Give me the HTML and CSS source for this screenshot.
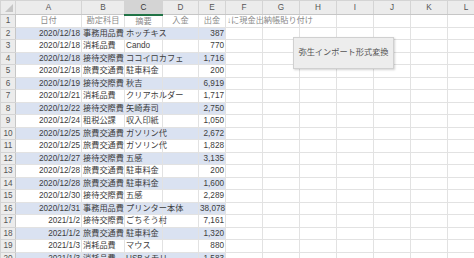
FILE: index.html
```html
<!DOCTYPE html>
<html lang="ja">
<head>
<meta charset="utf-8">
<link rel="stylesheet" href="styles.css">
</head>
<body>
<div class="sheet">
<table class="grid">
  <colgroup>
    <col class="w-rn"><col class="w-a"><col class="w-b"><col class="w-c"><col class="w-d"><col class="w-e">
    <col class="w-x"><col class="w-x"><col class="w-x"><col class="w-x"><col class="w-x"><col class="w-x"><col class="w-x">
  </colgroup>
  <tr class="head">
    <td class="rn corner"><span class="tri"></span></td>
    <td>A</td><td>B</td><td class="sel">C</td><td>D</td><td>E</td>
    <td>F</td><td>G</td><td>H</td><td>I</td><td>J</td><td>K</td><td>L</td>
  </tr>
  <tr class="titles">
    <td class="rn">1</td>
    <td class="ctr">日付</td><td class="ctr">勘定科目</td><td class="ctr">摘要</td><td class="ctr">入金</td><td class="ctr">出金</td>
    <td>↓に現金出納帳貼り付け</td><td></td><td></td><td></td><td></td><td></td><td></td>
  </tr>
  <tr class="band">
    <td class="rn">2</td>
    <td class="r">2020/12/18</td><td>事務用品費</td><td>ホッチキス</td><td></td><td class="r">387</td>
    <td class="o"></td><td class="o"></td><td class="o"></td><td class="o"></td><td class="o"></td><td class="o"></td><td class="o"></td>
  </tr>
  <tr>
    <td class="rn">3</td>
    <td class="r">2020/12/18</td><td>消耗品費</td><td>Cando</td><td></td><td class="r">770</td>
    <td></td><td></td><td></td><td></td><td></td><td></td><td></td>
  </tr>
  <tr class="band">
    <td class="rn">4</td>
    <td class="r">2020/12/18</td><td>接待交際費</td><td>ココイロカフェ</td><td></td><td class="r">1,716</td>
    <td class="o"></td><td class="o"></td><td class="o"></td><td class="o"></td><td class="o"></td><td class="o"></td><td class="o"></td>
  </tr>
  <tr>
    <td class="rn">5</td>
    <td class="r">2020/12/18</td><td>旅費交通費</td><td>駐車料金</td><td></td><td class="r">200</td>
    <td></td><td></td><td></td><td></td><td></td><td></td><td></td>
  </tr>
  <tr class="band">
    <td class="rn">6</td>
    <td class="r">2020/12/19</td><td>接待交際費</td><td>秋吉</td><td></td><td class="r">6,919</td>
    <td class="o"></td><td class="o"></td><td class="o"></td><td class="o"></td><td class="o"></td><td class="o"></td><td class="o"></td>
  </tr>
  <tr>
    <td class="rn">7</td>
    <td class="r">2020/12/21</td><td>消耗品費</td><td>クリアホルダー</td><td></td><td class="r">1,717</td>
    <td></td><td></td><td></td><td></td><td></td><td></td><td></td>
  </tr>
  <tr class="band">
    <td class="rn">8</td>
    <td class="r">2020/12/22</td><td>接待交際費</td><td>矢崎寿司</td><td></td><td class="r">2,750</td>
    <td class="o"></td><td class="o"></td><td class="o"></td><td class="o"></td><td class="o"></td><td class="o"></td><td class="o"></td>
  </tr>
  <tr>
    <td class="rn">9</td>
    <td class="r">2020/12/24</td><td>租税公課</td><td>収入印紙</td><td></td><td class="r">1,050</td>
    <td></td><td></td><td></td><td></td><td></td><td></td><td></td>
  </tr>
  <tr class="band">
    <td class="rn">10</td>
    <td class="r">2020/12/25</td><td>旅費交通費</td><td>ガソリン代</td><td></td><td class="r">2,672</td>
    <td class="o"></td><td class="o"></td><td class="o"></td><td class="o"></td><td class="o"></td><td class="o"></td><td class="o"></td>
  </tr>
  <tr>
    <td class="rn">11</td>
    <td class="r">2020/12/25</td><td>旅費交通費</td><td>ガソリン代</td><td></td><td class="r">1,828</td>
    <td></td><td></td><td></td><td></td><td></td><td></td><td></td>
  </tr>
  <tr class="band">
    <td class="rn">12</td>
    <td class="r">2020/12/27</td><td>接待交際費</td><td>五感</td><td></td><td class="r">3,135</td>
    <td class="o"></td><td class="o"></td><td class="o"></td><td class="o"></td><td class="o"></td><td class="o"></td><td class="o"></td>
  </tr>
  <tr>
    <td class="rn">13</td>
    <td class="r">2020/12/28</td><td>旅費交通費</td><td>駐車料金</td><td></td><td class="r">200</td>
    <td></td><td></td><td></td><td></td><td></td><td></td><td></td>
  </tr>
  <tr class="band">
    <td class="rn">14</td>
    <td class="r">2020/12/28</td><td>旅費交通費</td><td>駐車料金</td><td></td><td class="r">1,600</td>
    <td class="o"></td><td class="o"></td><td class="o"></td><td class="o"></td><td class="o"></td><td class="o"></td><td class="o"></td>
  </tr>
  <tr>
    <td class="rn">15</td>
    <td class="r">2020/12/30</td><td>接待交際費</td><td>五感</td><td></td><td class="r">2,289</td>
    <td></td><td></td><td></td><td></td><td></td><td></td><td></td>
  </tr>
  <tr class="band">
    <td class="rn">16</td>
    <td class="r">2020/12/31</td><td>事務用品費</td><td>プリンター本体</td><td></td><td class="r">38,078</td>
    <td class="o"></td><td class="o"></td><td class="o"></td><td class="o"></td><td class="o"></td><td class="o"></td><td class="o"></td>
  </tr>
  <tr>
    <td class="rn">17</td>
    <td class="r">2021/1/2</td><td>接待交際費</td><td>ごちそう村</td><td></td><td class="r">7,161</td>
    <td></td><td></td><td></td><td></td><td></td><td></td><td></td>
  </tr>
  <tr class="band">
    <td class="rn">18</td>
    <td class="r">2021/1/2</td><td>旅費交通費</td><td>駐車料金</td><td></td><td class="r">1,320</td>
    <td class="o"></td><td class="o"></td><td class="o"></td><td class="o"></td><td class="o"></td><td class="o"></td><td class="o"></td>
  </tr>
  <tr>
    <td class="rn">19</td>
    <td class="r">2021/1/3</td><td>消耗品費</td><td>マウス</td><td></td><td class="r">880</td>
    <td></td><td></td><td></td><td></td><td></td><td></td><td></td>
  </tr>
  <tr class="band">
    <td class="rn">20</td>
    <td class="r">2021/1/3</td><td>消耗品費</td><td>USBメモリ</td><td></td><td class="r">1,583</td>
    <td class="o"></td><td class="o"></td><td class="o"></td><td class="o"></td><td class="o"></td><td class="o"></td><td class="o"></td>
  </tr>
</table>
<div class="btn">弥生インポート形式変換</div>
</div>
</body>
</html>
```

FILE: styles.css
```css
html, body {
  margin: 0;
  padding: 0;
  background: #ffffff;
  overflow: hidden;
}
.sheet {
  position: relative;
  width: 474px;
  height: 258px;
  overflow: hidden;
  font-family: "Liberation Sans", "Noto Sans CJK JP", sans-serif;
  font-size: 8.2px;
  color: #3c3c3c;
}
.grid {
  border-collapse: collapse;
  table-layout: fixed;
  width: 484px;
}
.w-rn { width: 15px; }
.w-a { width: 66px; }
.w-b { width: 43px; }
.w-c { width: 38px; }
.w-d { width: 36px; }
.w-e { width: 27px; }
.w-x { width: 37px; }
.grid tr { height: 12.5px; }
.grid td {
  box-sizing: border-box;
  border: 1px solid #e2e2e2;
  white-space: nowrap;
  line-height: 11px;
  height: 12.5px;
  padding: 0 1px;
  overflow: visible;
  vertical-align: middle;
  text-align: left;
}
.grid td.r { text-align: right; }
.grid td.ctr { text-align: center; }
.grid tr.head { height: 14px; }
.grid tr.head td {
  height: 14px;
  background: #ececec;
  text-align: center;
  color: #555;
  border-color: #d4d4d4;
  border-bottom-color: #c6c6c6;
}
.grid tr.head td.sel {
  background: #d4d4d4;
  border-bottom: 2px solid #217346;
  color: #333;
}
.corner { position: relative; }
.tri {
  position: absolute;
  right: 2px;
  bottom: 2px;
  width: 0;
  height: 0;
  border-left: 8px solid transparent;
  border-bottom: 8px solid #c6c6c6;
}
.grid td.rn {
  background: #ececec;
  color: #555;
  text-align: center;
  padding: 0;
  border-color: #d4d4d4;
  border-right-color: #c6c6c6;
}
.titles td { color: #8a8a8a; }
.grid tr.titles td.rn { color: #555; }
.band td { background: #dae2f1; }
.grid tr.band td.o { background: #ffffff; }
.grid tr.band td.rn { background: #ececec; }
.btn {
  position: absolute;
  left: 293px;
  top: 37px;
  width: 101px;
  height: 32px;
  box-sizing: border-box;
  background: #ededed;
  border: 1px solid #d0d0d0;
  box-shadow: 1px 1px 2px rgba(0,0,0,0.18);
  color: #555;
  font-size: 8.2px;
  line-height: 30px;
  text-align: center;
  white-space: nowrap;
}
```
